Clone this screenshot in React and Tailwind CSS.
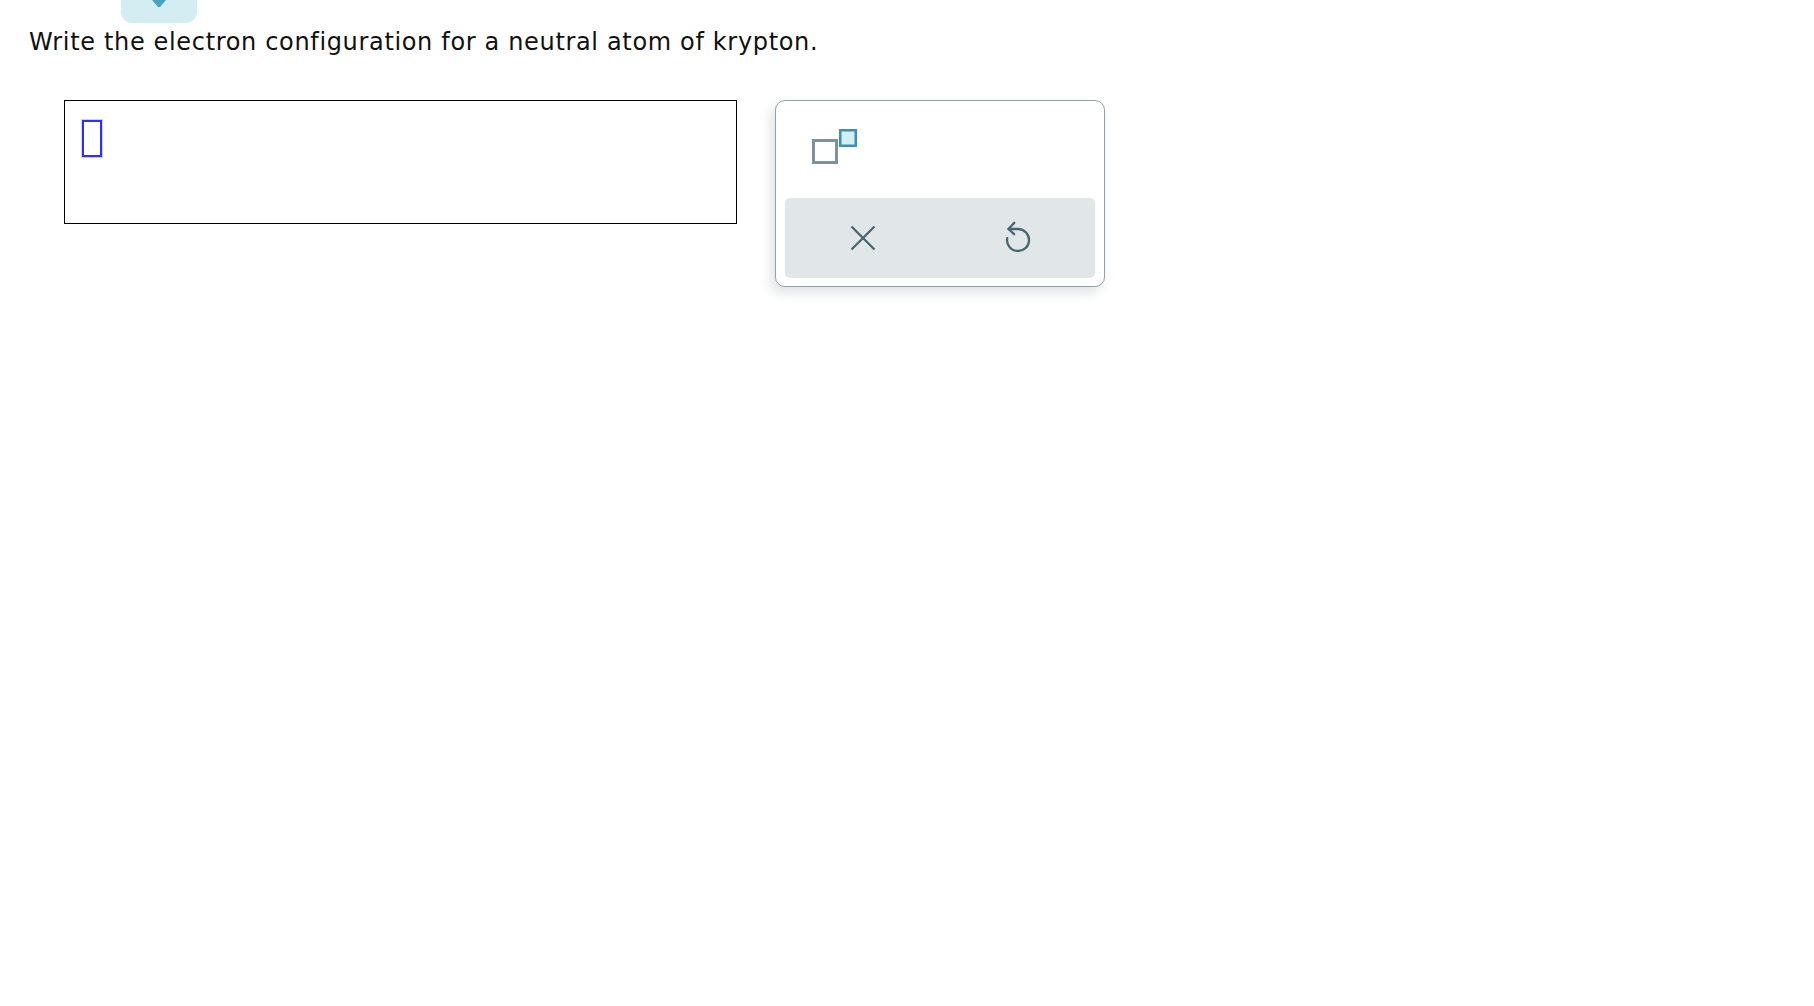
import React from "react";

function SupIcon() {
  return (
    <svg width="46" height="36" viewBox="0 0 46 36" className="block">
      <rect x="1.5" y="11.5" width="23" height="22" fill="#fff" stroke="#7d929c" strokeWidth="3" />
      <rect x="28.25" y="1.25" width="15.5" height="15.5" fill="#d6eef5" stroke="#3d91ae" strokeWidth="2.5" />
    </svg>
  );
}

function XIcon() {
  return (
    <svg width="26" height="26" viewBox="0 0 26 26" fill="none" stroke="#4a6670" strokeWidth="2.3">
      <path d="M1.5 1.5L24.5 24.5M24.5 1.5L1.5 24.5" />
    </svg>
  );
}

function UndoIcon() {
  return (
    <svg width="28" height="34" viewBox="0 1.5 28 34" fill="none" stroke="#4a6670" strokeWidth="2.3" strokeLinecap="round" strokeLinejoin="round">
      <path d="M4.5 9.5 H14 A11 11 0 1 1 3.2 18.6" />
      <path d="M10.3 3.3 L4.5 9.5 L10.1 14.7" />
    </svg>
  );
}

export default function App() {
  return (
    <div className="min-h-screen bg-white text-black font-['DejaVu_Sans',Verdana,sans-serif]">
      <div className="ml-[121px] w-[76px] h-[23px] bg-[#d4edf3] rounded-b-[11px] flex justify-center">
        <svg width="16" height="8" viewBox="0 0 16 8" className="block">
          <path d="M1 0 L15 0 L9.5 6.5 Q8 8 6.5 6.5 Z" fill="#4aa3c4" />
        </svg>
      </div>
      <p className="ml-[29px] mt-[4px] text-[24px] tracking-[0.66px] leading-[30px] text-[#111]">
        Write the electron configuration for a neutral atom of krypton.
      </p>
      <div className="flex items-start ml-[64px] mt-[43px] gap-[38px]">
        <div className="w-[673px] h-[124px] border border-black pl-[17px] pt-[19px]">
          <div className="w-[20px] h-[37px] border-2 border-[#2f2fff] shadow-[0_0_0_1px_rgba(120,120,255,0.35)]" />
        </div>
        <div className="w-[330px] h-[187px] border border-[#8fa2ab] rounded-[10px] bg-white shadow-[-4px_6px_12px_rgba(60,80,90,0.16)] flex flex-col px-[9px] pb-[8px]">
          <div className="h-[97px] pl-[27px] pt-[28px]">
            <SupIcon />
          </div>
          <div className="flex-1 bg-[#e1e6e8] rounded-[5px] flex items-center">
            <div className="flex-1 flex justify-center">
              <XIcon />
            </div>
            <div className="flex-1 flex justify-center">
              <UndoIcon />
            </div>
          </div>
        </div>
      </div>
    </div>
  );
}
